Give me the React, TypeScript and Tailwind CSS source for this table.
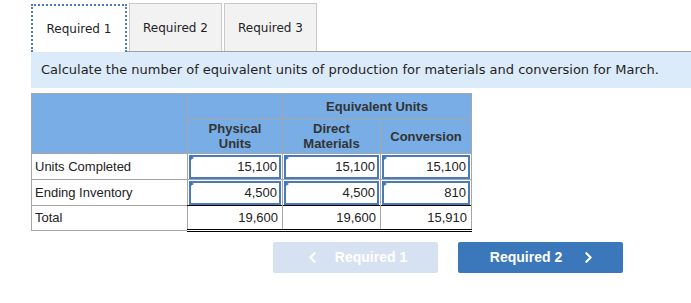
import { ChevronLeft, ChevronRight } from 'lucide-react';
import { clsx } from 'clsx';

const rows = [
  { label: 'Units Completed', physical: '15,100', materials: '15,100', conversion: '15,100', input: true },
  { label: 'Ending Inventory', physical: '4,500', materials: '4,500', conversion: '810', input: true },
  { label: 'Total', physical: '19,600', materials: '19,600', conversion: '15,910', input: false },
];

const tabs = ['Required 1', 'Required 2', 'Required 3'];

// Blue-bordered entry cell with the little marker in its top-left corner
const InputCell = ({ value }: { value: string }) => (
  <td className="border border-[#a6a6a6] p-0 h-[26px]">
    <div className="relative h-[24px] mx-px border-2 border-[#4b7ab8] flex items-center justify-end pr-[2px]">
      <span className="absolute -left-[2px] -top-[2px] w-0 h-0 border-y-[3px] border-y-transparent border-l-[5px] border-l-[#3b78c4]" />
      {value}
    </div>
  </td>
);

export default function App() {
  return (
    <div className="w-[691px] h-[303px] bg-white text-[#222] font-['Liberation_Sans',Arial,sans-serif]">
      <div className="flex items-end pl-[31px] pt-[3px] gap-[2px] font-['DejaVu_Sans',Verdana,sans-serif] text-[12px] whitespace-nowrap">
        {tabs.map((t, i) => (
          <div
            key={t}
            className={clsx(
              'h-[48px] flex items-center justify-center',
              i === 0
                ? 'w-[96px] bg-white border-2 border-dotted border-[#4a7cc0] border-b-0 relative z-10 -mb-px'
                : 'w-[93px] bg-[#f2f2f2] border border-[#c9c9c9] border-b-0'
            )}
          >
            {t}
          </div>
        ))}
      </div>

      <div className="ml-[31px] h-[37px] border-t border-[#a0a0a0] bg-[#dcebf9] flex items-center pl-[10px] font-['DejaVu_Sans',Verdana,sans-serif] text-[13px] text-[#1f1f1f]">
        Calculate the number of equivalent units of production for materials and conversion for March.
      </div>

      <table className="ml-[31px] mt-[5px] border-collapse text-[13px] w-[440px] table-fixed">
        <colgroup>
          <col className="w-[156px]" />
          <col className="w-[95px]" />
          <col className="w-[98px]" />
          <col className="w-[91px]" />
        </colgroup>
        <thead className="bg-[#78ade5] font-bold text-[#333] text-center leading-[15px]">
          <tr className="h-[26px]">
            <th rowSpan={2} className="border border-[#a6a6a6]" />
            <th className="border border-[#a6a6a6]" />
            <th colSpan={2} className="border border-[#a6a6a6]">Equivalent Units</th>
          </tr>
          <tr className="h-[34px]">
            <th className="border border-[#a6a6a6] pb-px">Physical<br />Units</th>
            <th className="border border-[#a6a6a6] pb-px">Direct<br />Materials</th>
            <th className="border border-[#a6a6a6] pb-px">Conversion</th>
          </tr>
        </thead>
        <tbody>
          {rows.map((r) =>
            r.input ? (
              <tr key={r.label}>
                <td className="border border-[#a6a6a6] h-[26px] pl-[3px]">{r.label}</td>
                <InputCell value={r.physical} />
                <InputCell value={r.materials} />
                <InputCell value={r.conversion} />
              </tr>
            ) : (
              <tr key={r.label}>
                <td className="border border-[#a6a6a6] h-[25px] pl-[3px]">{r.label}</td>
                {[r.physical, r.materials, r.conversion].map((v, i) => (
                  <td
                    key={i}
                    className="border border-[#a6a6a6] border-t-black border-b-[3px] border-b-black border-double text-right pr-[4px]"
                  >
                    {v}
                  </td>
                ))}
              </tr>
            )
          )}
        </tbody>
      </table>

      <div className="flex pl-[273px] gap-[20px] mt-[10px] text-[14px] font-bold text-white">
        <button className="w-[165px] h-[31px] rounded-[2px] bg-[#d6e2f1] flex items-center justify-center gap-[14px]">
          <ChevronLeft size={17} strokeWidth={3} />
          Required 1
        </button>
        <button className="w-[165px] h-[31px] rounded-[2px] bg-[#3b77bb] flex items-center justify-center gap-[18px] pl-[6px]">
          Required 2
          <ChevronRight size={17} strokeWidth={3} />
        </button>
      </div>
    </div>
  );
}
